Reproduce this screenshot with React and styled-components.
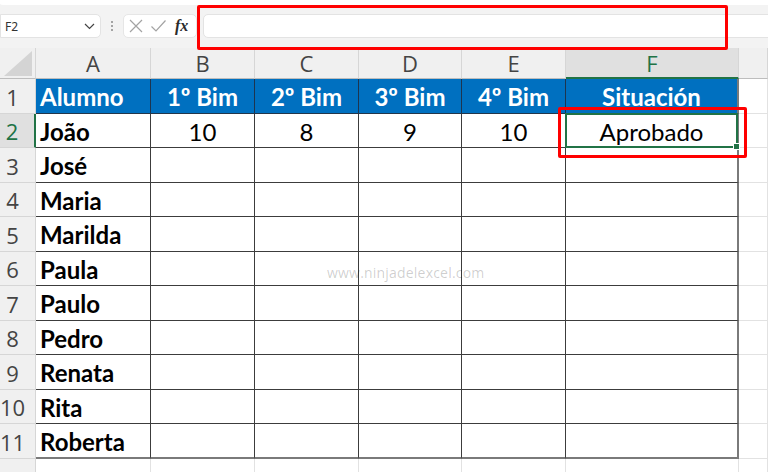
import React from "react";
import styled, { createGlobalStyle, css } from "styled-components";

// colors
const colors = {
    toolbar: "#f3f3f3",
    headerBg: "#f0f0f0",
    headerLine: "#d6d6d6",
    headerText: "#444444",
    grid: "#e2e2e2",
    tableLine: "#3c3c3c",
    blue: "#0070c0",
    excelGreen: "#217346",
    red: "#ff0000"
}

const GlobalStyle = createGlobalStyle`
    html, body {
        margin: 0;
        padding: 0;
        background: #ffffff;
        overflow: hidden;
    }
    body {
        font-family: Lato, "Open Sans", sans-serif;
    }
`

const Page = styled.div`
    position: relative;
    width: 768px;
    height: 472px;
    overflow: hidden;
    background: #ffffff;
`

//toolbar
const Toolbar = styled.div`
    height: 48px;
    background: ${colors.toolbar};
    display: flex;
    flex-direction: column;
`

const RibbonEdge = styled.div`
    height: 5px;
    background: #ffffff;
    border-radius: 0 0 6px 6px;
    margin: 0 -6px 0 -2px;
`

const FormulaRow = styled.div`
    display: flex;
    align-items: center;
    height: 24px;
    margin-top: 9px;
`

const NameBox = styled.div`
    width: 101px;
    height: 24px;
    box-sizing: border-box;
    background: #ffffff;
    border: 1px solid #e3e3e3;
    border-radius: 0 5px 5px 0;
    display: flex;
    align-items: center;
    justify-content: space-between;
    padding: 0 5px 0 4px;
    font-family: "Noto Sans", sans-serif;
    font-size: 12px;
    color: #333333;
`

const Grip = styled.div`
    width: 22px;
    display: flex;
    flex-direction: column;
    align-items: center;
    gap: 2px;
    span {
        width: 2px;
        height: 2px;
        border-radius: 1px;
        background: #8a8a8a;
    }
`

const ButtonGroup = styled.div`
    width: 74px;
    height: 24px;
    box-sizing: border-box;
    background: #ffffff;
    border: 1px solid #e6e6e6;
    border-radius: 5px;
    display: flex;
    align-items: center;
    padding-left: 4px;
    gap: 6px;
`

const Fx = styled.span`
    font-family: "Liberation Serif", serif;
    font-style: italic;
    font-weight: bold;
    font-size: 16px;
    color: #2b2b2b;
    margin-left: 2px;
`

const FormulaInput = styled.div`
    flex: 1;
    height: 24px;
    margin-left: 6px;
    margin-right: -8px;
    background: #ffffff;
    border: 1px solid #e3e3e3;
    border-radius: 5px;
    box-sizing: border-box;
`

//sheet
const Sheet = styled.div`
    display: grid;
    grid-template-columns: 36px 115px 104px 104px 103px 104px 173px 1fr;
    grid-template-rows: 31px repeat(11, 34.5px) 40px;
`

const Corner = styled.div`
    background: ${colors.headerBg};
    border-right: 1px solid ${colors.headerLine};
    border-bottom: 1px solid #bdbdbd;
    display: flex;
    align-items: flex-end;
    justify-content: flex-end;
    padding: 0 3px 2px 0;
`

const ColHeader = styled.div`
    background: ${p => p.$active ? "#e0e0e0" : colors.headerBg};
    color: ${p => p.$active ? colors.excelGreen : colors.headerText};
    border-right: 1px solid ${colors.headerLine};
    border-bottom: ${p => p.$active ? `2px solid ${colors.excelGreen}` : "1px solid #bdbdbd"};
    display: flex;
    align-items: center;
    justify-content: center;
    font-family: "Open Sans", sans-serif;
    font-size: 22px;
`

const RowHeader = styled.div`
    background: ${p => p.$active ? "#e0e0e0" : colors.headerBg};
    color: ${p => p.$active ? colors.excelGreen : colors.headerText};
    border-bottom: 1px solid ${colors.headerLine};
    border-right: ${p => p.$active ? `2px solid ${colors.excelGreen}` : `1px solid ${colors.headerLine}`};
    display: flex;
    align-items: center;
    justify-content: center;
    padding: 2px 10px 0 0;
    font-family: "Open Sans", sans-serif;
    font-size: 22px;
    line-height: 1;
    box-sizing: border-box;
`

const Cell = styled.div`
    position: relative;
    display: flex;
    align-items: center;
    justify-content: ${p => p.$align === "left" ? "flex-start" : "center"};
    padding-left: ${p => p.$align === "left" ? "4px" : "0"};
    padding-top: 3px;
    font-size: 24px;
    font-weight: ${p => p.$bold ? 700 : 400};
    color: #000000;
    line-height: 1;
    white-space: nowrap;
    box-sizing: border-box;
    border-right: 1px solid ${colors.tableLine};
    border-bottom: 1px solid ${colors.tableLine};

    ${p => p.$head && css`
        background: ${colors.blue};
        color: #ffffff;
        border-right-color: #1d3550;
        border-bottom-color: #23364a;
    `}

    ${p => p.$lastRow && css`
        border-bottom: 2px solid #7a7a7a;
    `}

    ${p => p.$lastCol && css`
        border-right: 2px solid #7a7a7a;
    `}

    ${p => p.$empty && css`
        border-right: 1px solid ${colors.grid};
        border-bottom: 1px solid ${colors.grid};
    `}

    ${p => p.$selected && css`
        &::after {
            content: "";
            position: absolute;
            inset: -1px -1px -1px -1px;
            border: 2px solid ${colors.excelGreen};
            pointer-events: none;
        }
        &::before {
            content: "";
            position: absolute;
            right: -3px;
            bottom: -3px;
            width: 5px;
            height: 5px;
            background: ${colors.excelGreen};
            border: 1px solid #ffffff;
            z-index: 2;
        }
    `}
`

//annotations
const RedBox = styled.div`
    position: absolute;
    left: ${p => p.$x}px;
    top: ${p => p.$y}px;
    width: ${p => p.$w}px;
    height: ${p => p.$h}px;
    box-sizing: border-box;
    border: 3px solid ${colors.red};
    border-radius: 2px;
    pointer-events: none;
`

const Watermark = styled.div`
    position: absolute;
    left: 327px;
    top: 263px;
    font-family: "Open Sans", sans-serif;
    font-size: 14px;
    letter-spacing: 0.2px;
    color: rgba(0, 0, 0, 0.2);
`

const columns = ["A", "B", "C", "D", "E", "F"]
const headers = ["Alumno", "1º Bim", "2º Bim", "3º Bim", "4º Bim", "Situación"]
const students = [
    ["João", "10", "8", "9", "10", "Aprobado"],
    ["José"], ["Maria"], ["Marilda"], ["Paula"], ["Paulo"],
    ["Pedro"], ["Renata"], ["Rita"], ["Roberta"]
]

function Chevron() {
    return (
        <svg width="11" height="7" viewBox="0 0 11 7">
            <path d="M1 1 L5.5 5.5 L10 1" fill="none" stroke="#444" strokeWidth="1.2" />
        </svg>
    )
}

function CancelIcon() {
    return (
        <svg width="16" height="16" viewBox="0 0 16 16">
            <path d="M2 2 L14 14 M14 2 L2 14" stroke="#a3a3a3" strokeWidth="1.2" />
        </svg>
    )
}

function CheckIcon() {
    return (
        <svg width="17" height="16" viewBox="0 0 17 16">
            <path d="M1.5 8.5 L6 13 L15.5 2.5" fill="none" stroke="#a3a3a3" strokeWidth="1.2" />
        </svg>
    )
}

function SelectAll() {
    return (
        <svg width="28" height="25" viewBox="0 0 28 25">
            <polygon points="28,0 28,25 0,25" fill="#d4d4d4" />
        </svg>
    )
}

export default function App() {
    return (
        <Page>
            <GlobalStyle />
            <Toolbar>
                <RibbonEdge />
                <FormulaRow>
                    <NameBox>
                        <span>F2</span>
                        <Chevron />
                    </NameBox>
                    <Grip><span /><span /><span /></Grip>
                    <ButtonGroup>
                        <CancelIcon />
                        <CheckIcon />
                        <Fx>fx</Fx>
                    </ButtonGroup>
                    <FormulaInput />
                </FormulaRow>
            </Toolbar>

            <Sheet>
                <Corner><SelectAll /></Corner>
                {columns.map(c => (
                    <ColHeader key={c} $active={c === "F"}>{c}</ColHeader>
                ))}
                <ColHeader />

                <RowHeader>1</RowHeader>
                {headers.map((h, i) => (
                    <Cell key={h} $head $bold $align={i === 0 ? "left" : "center"} $lastCol={i === 5}>{h}</Cell>
                ))}
                <Cell $empty />

                {students.map((row, r) => (
                    <React.Fragment key={row[0]}>
                        <RowHeader $active={r === 0}>{r + 2}</RowHeader>
                        {columns.map((c, i) => (
                            <Cell
                                key={c}
                                $bold={i === 0}
                                $align={i === 0 ? "left" : "center"}
                                $selected={r === 0 && i === 5}
                                $lastRow={r === students.length - 1}
                                $lastCol={i === 5}
                            >
                                {row[i] || ""}
                            </Cell>
                        ))}
                        <Cell $empty />
                    </React.Fragment>
                ))}

                <RowHeader>12</RowHeader>
                {columns.map(c => <Cell key={c} $empty />)}
                <Cell $empty />
            </Sheet>

            <Watermark>www.ninjadelexcel.com</Watermark>
            <RedBox $x={197} $y={5} $w={531} $h={45} />
            <RedBox $x={558} $y={107} $w={189} $h={51} />
        </Page>
    )
}
